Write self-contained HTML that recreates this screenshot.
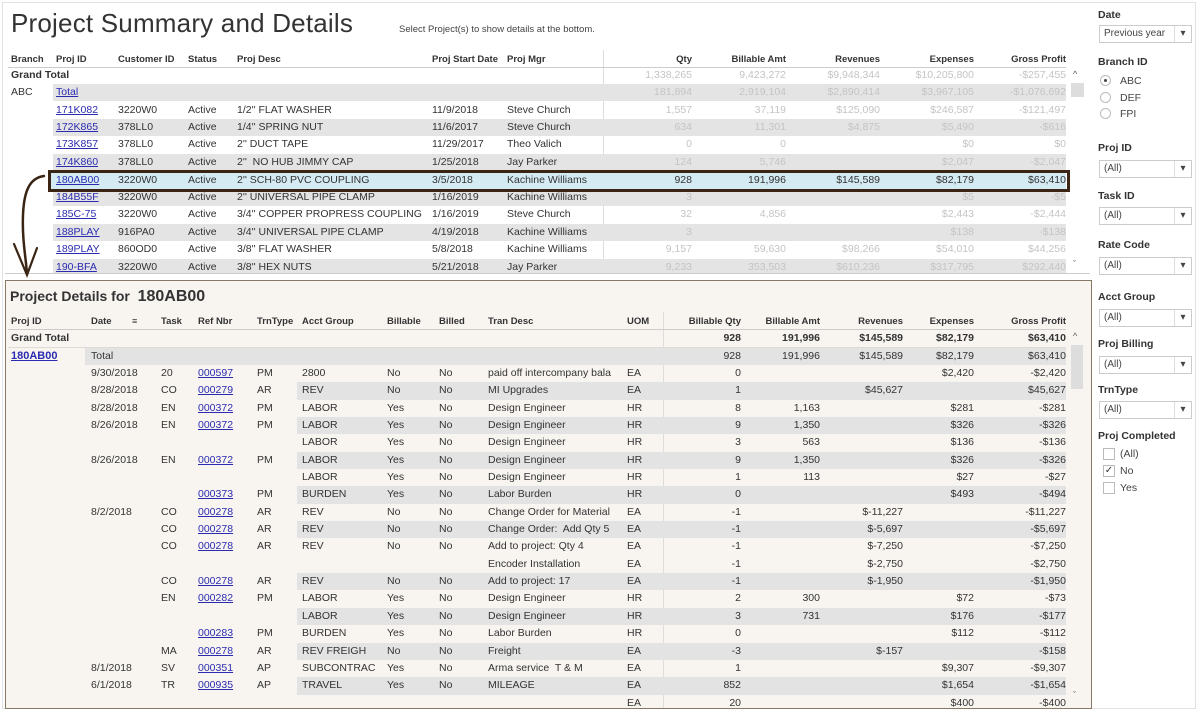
<!DOCTYPE html>
<html><head><meta charset="utf-8">
<style>
*{margin:0;padding:0;box-sizing:border-box}
body{width:1200px;height:711px;overflow:hidden;background:#fff;font-family:"Liberation Sans",sans-serif;color:#333;font-size:10.5px;position:relative}
.a{position:absolute;white-space:nowrap}
.r{position:absolute;left:0;width:1200px;height:17.4px;line-height:17.4px}
.r span{position:absolute;white-space:nowrap}
.lk{color:#2b2bb0;text-decoration:underline}
.g{color:#c4c4c4}
.hd{font-weight:bold;font-size:9.5px;color:#333}
.c1{left:11px}.c2{left:56px}.c3{left:118px}.c4{left:188px}.c5{left:237px}.c6{left:432px}.c7{left:507px}
.n1{right:508px}.n2{right:414px}.n3{right:320px}.n4{right:226px}.n5{right:134px}
.d1{left:11px}.d2{left:91px}.d3{left:161px}.d4{left:198px}.d5{left:257px}.d6{left:302px}.d7{left:387px}.d8{left:439px}.d9{left:488px}.d10{left:627px}
.m1{right:459px}.m2{right:380px}.m3{right:297px}.m4{right:226px}.m5{right:134px}
.bandT{position:absolute;left:53px;width:1013px;height:17.4px;background:#e4e4e4}
.bandD{position:absolute;left:297px;width:769px;height:17.4px;background:#e3e3e3}
.ln{position:absolute;height:1px;background:#dedad6}
.lbl{position:absolute;left:1098px;font-weight:bold;font-size:10.5px;color:#333}
.dd{position:absolute;left:1099px;width:93px;height:18px;border:1px solid #ccc;background:#fff;font-size:10px;line-height:16px;padding-left:4px;color:#444}
.dd:after{content:"▾";position:absolute;right:0;top:0;width:16px;text-align:center;border-left:1px solid #ddd;font-size:10px}
.rad{position:absolute;left:1100px;width:11px;height:11px;border:1px solid #bbb;border-radius:50%;background:#fff}
.cb{position:absolute;left:1103px;width:12px;height:12px;border:1px solid #bbb;background:#fff}
.opt{position:absolute;left:1120px;font-size:10.5px;color:#444}
</style></head><body>
<div class="a" style="left:2px;top:2px;width:1194px;height:707px;border:1px solid #e2e2e2"></div>
<div class="a" style="left:11px;top:8px;font-size:26px;color:#333;letter-spacing:0.2px">Project Summary and Details</div>
<div class="a" style="left:399px;top:24px;font-size:9.5px;color:#444">Select Project(s) to show details at the bottom.</div>

<!-- top table -->
<div class="a" style="left:603px;top:50px;width:1px;height:222px;background:#ddd"></div>
<div class="ln" style="left:8px;top:67px;width:1058px;background:#ccc"></div>
<div class="r hd" style="top:51px"><span class="c1">Branch</span><span class="c2">Proj ID</span><span class="c3">Customer ID</span><span class="c4">Status</span><span class="c5">Proj Desc</span><span class="c6">Proj Start Date</span><span class="c7">Proj Mgr</span><span class="n1">Qty</span><span class="n2">Billable Amt</span><span class="n3">Revenues</span><span class="n4">Expenses</span><span class="n5">Gross Profit</span></div>
<div class="r" style="top:66.5px"><span class="c1" style="font-weight:bold">Grand Total</span><span class="n1 g">1,338,265</span><span class="n2 g">9,423,272</span><span class="n3 g">$9,948,344</span><span class="n4 g">$10,205,800</span><span class="n5 g">-$257,455</span></div>
<div class="bandT" style="top:84px"></div>
<div class="r" style="top:84px"><span class="c1">ABC</span><span class="c2 lk">Total</span><span class="n1 g">181,894</span><span class="n2 g">2,919,104</span><span class="n3 g">$2,890,414</span><span class="n4 g">$3,967,105</span><span class="n5 g">-$1,076,692</span></div>
<div class="bandT" style="top:118.5px"></div>
<div class="bandT" style="top:153.5px"></div>
<div class="bandT" style="top:188.5px"></div>
<div class="bandT" style="top:223.5px"></div>
<div class="bandT" style="top:258.5px;height:14px"></div>
<div class="a" style="left:50px;top:173px;width:1016px;height:16px;background:#d4ebf3"></div>
<div class="r" style="top:101.5px"><span class="c2 lk">171K082</span><span class="c3">3220W0</span><span class="c4">Active</span><span class="c5">1/2'' FLAT WASHER</span><span class="c6">11/9/2018</span><span class="c7">Steve Church</span><span class="n1 g">1,557</span><span class="n2 g">37,119</span><span class="n3 g">$125,090</span><span class="n4 g">$246,587</span><span class="n5 g">-$121,497</span></div>
<div class="r" style="top:118.5px"><span class="c2 lk">172K865</span><span class="c3">378LL0</span><span class="c4">Active</span><span class="c5">1/4'' SPRING NUT</span><span class="c6">11/6/2017</span><span class="c7">Steve Church</span><span class="n1 g">634</span><span class="n2 g">11,301</span><span class="n3 g">$4,875</span><span class="n4 g">$5,490</span><span class="n5 g">-$616</span></div>
<div class="r" style="top:136px"><span class="c2 lk">173K857</span><span class="c3">378LL0</span><span class="c4">Active</span><span class="c5">2'' DUCT TAPE</span><span class="c6">11/29/2017</span><span class="c7">Theo Valich</span><span class="n1 g">0</span><span class="n2 g">0</span><span class="n4 g">$0</span><span class="n5 g">$0</span></div>
<div class="r" style="top:153.5px"><span class="c2 lk">174K860</span><span class="c3">378LL0</span><span class="c4">Active</span><span class="c5">2''&nbsp; NO HUB JIMMY CAP</span><span class="c6">1/25/2018</span><span class="c7">Jay Parker</span><span class="n1 g">124</span><span class="n2 g">5,746</span><span class="n4 g">$2,047</span><span class="n5 g">-$2,047</span></div>
<div class="r" style="top:171.5px"><span class="c2 lk">180AB00</span><span class="c3">3220W0</span><span class="c4">Active</span><span class="c5">2'' SCH-80 PVC COUPLING</span><span class="c6">3/5/2018</span><span class="c7">Kachine Williams</span><span class="n1">928</span><span class="n2">191,996</span><span class="n3">$145,589</span><span class="n4">$82,179</span><span class="n5">$63,410</span></div>
<div class="r" style="top:188.5px"><span class="c2 lk">184B55F</span><span class="c3">3220W0</span><span class="c4">Active</span><span class="c5">2'' UNIVERSAL PIPE CLAMP</span><span class="c6">1/16/2019</span><span class="c7">Kachine Williams</span><span class="n1 g">3</span><span class="n4 g">$5</span><span class="n5 g">-$5</span></div>
<div class="r" style="top:206px"><span class="c2 lk">185C-75</span><span class="c3">3220W0</span><span class="c4">Active</span><span class="c5">3/4'' COPPER PROPRESS COUPLING</span><span class="c6">1/16/2019</span><span class="c7">Steve Church</span><span class="n1 g">32</span><span class="n2 g">4,856</span><span class="n4 g">$2,443</span><span class="n5 g">-$2,444</span></div>
<div class="r" style="top:223.5px"><span class="c2 lk">188PLAY</span><span class="c3">916PA0</span><span class="c4">Active</span><span class="c5">3/4'' UNIVERSAL PIPE CLAMP</span><span class="c6">4/19/2018</span><span class="c7">Kachine Williams</span><span class="n1 g">3</span><span class="n4 g">$138</span><span class="n5 g">-$138</span></div>
<div class="r" style="top:241px"><span class="c2 lk">189PLAY</span><span class="c3">860OD0</span><span class="c4">Active</span><span class="c5">3/8'' FLAT WASHER</span><span class="c6">5/8/2018</span><span class="c7">Kachine Williams</span><span class="n1 g">9,157</span><span class="n2 g">59,630</span><span class="n3 g">$98,266</span><span class="n4 g">$54,010</span><span class="n5 g">$44,256</span></div>
<div class="r" style="top:258.5px;height:14px;overflow:hidden"><span class="c2 lk">190-BFA</span><span class="c3">3220W0</span><span class="c4">Active</span><span class="c5">3/8'' HEX NUTS</span><span class="c6">5/21/2018</span><span class="c7">Jay Parker</span><span class="n1 g">9,233</span><span class="n2 g">353,503</span><span class="n3 g">$610,236</span><span class="n4 g">$317,795</span><span class="n5 g">$292,440</span></div>
<div class="a" style="left:48px;top:170px;width:1022px;height:22px;border:3px solid #3a2514"></div>
<!-- top scrollbar -->
<div class="a" style="left:1073px;top:69px;font-size:9px;color:#555">&#94;</div>
<div class="a" style="left:1071px;top:83px;width:13px;height:14px;background:#ddd"></div>
<div class="a" style="left:1073px;top:259px;font-size:9px;color:#555">&#711;</div>
<div class="a" style="left:5px;top:273px;width:1085px;height:1px;background:#ccc"></div>

<!-- arrow -->
<svg class="a" style="left:0;top:0" width="120" height="300"><path d="M44 176 C30 178 24 190 23 215 C22 240 26 258 27 274" fill="none" stroke="#3a2514" stroke-width="2.5" stroke-linecap="round"/><path d="M14 244 L27 275 L37 248" fill="none" stroke="#3a2514" stroke-width="2.2" stroke-linecap="round"/></svg>

<!-- detail panel -->
<div class="a" style="left:5px;top:280px;width:1087px;height:429px;border:1px solid #8a7866;background:#f8f5f1;overflow:hidden">
<div style="position:absolute;left:-6px;top:-281px;width:1200px;height:711px">
<div class="a" style="left:10px;top:288px;font-size:14px;font-weight:bold;color:#333">Project Details for&nbsp; <span style="font-size:16px">180AB00</span></div>
<div class="a" style="left:663px;top:312px;width:1px;height:400px;background:#ddd"></div>
<div class="ln" style="left:8px;top:329px;width:1058px;background:#ccc"></div>
<div class="ln" style="left:8px;top:347px;width:1058px"></div>
<div class="r hd" style="top:313px"><span class="d1">Proj ID</span><span class="d2">Date</span><span style="left:132px;font-size:9px">&#8801;</span><span class="d3">Task</span><span class="d4">Ref Nbr</span><span class="d5">TrnType</span><span class="d6">Acct Group</span><span class="d7">Billable</span><span class="d8">Billed</span><span class="d9">Tran Desc</span><span class="d10">UOM</span><span class="m1">Billable Qty</span><span class="m2">Billable Amt</span><span class="m3">Revenues</span><span class="m4">Expenses</span><span class="m5">Gross Profit</span></div>
<div class="r" style="top:330px;font-weight:bold"><span class="d1">Grand Total</span><span class="m1">928</span><span class="m2">191,996</span><span class="m3">$145,589</span><span class="m4">$82,179</span><span class="m5">$63,410</span></div>

<div class="bandD" style="top:347.5px;left:85px;width:981px"></div>
<div class="bandD" style="top:382.2px"></div>
<div class="bandD" style="top:416.9px"></div>
<div class="bandD" style="top:451.6px"></div>
<div class="bandD" style="top:486.3px"></div>
<div class="bandD" style="top:521px"></div>
<div class="bandD" style="top:573.1px"></div>
<div class="bandD" style="top:607.8px"></div>
<div class="bandD" style="top:642.5px"></div>
<div class="bandD" style="top:677.2px"></div>

<div class="r" style="top:347.5px"><span class="d1 lk" style="font-weight:bold;font-size:11px">180AB00</span><span class="d2">Total</span><span class="m1">928</span><span class="m2">191,996</span><span class="m3">$145,589</span><span class="m4">$82,179</span><span class="m5">$63,410</span></div>
<div class="r" style="top:364.9px"><span class="d2">9/30/2018</span><span class="d3">20</span><span class="d4 lk">000597</span><span class="d5">PM</span><span class="d6">2800</span><span class="d7">No</span><span class="d8">No</span><span class="d9">paid off intercompany bala</span><span class="d10">EA</span><span class="m1">0</span><span class="m4">$2,420</span><span class="m5">-$2,420</span></div>
<div class="r" style="top:382.2px"><span class="d2">8/28/2018</span><span class="d3">CO</span><span class="d4 lk">000279</span><span class="d5">AR</span><span class="d6">REV</span><span class="d7">No</span><span class="d8">No</span><span class="d9">MI Upgrades</span><span class="d10">EA</span><span class="m1">1</span><span class="m3">$45,627</span><span class="m5">$45,627</span></div>
<div class="r" style="top:399.6px"><span class="d2">8/28/2018</span><span class="d3">EN</span><span class="d4 lk">000372</span><span class="d5">PM</span><span class="d6">LABOR</span><span class="d7">Yes</span><span class="d8">No</span><span class="d9">Design Engineer</span><span class="d10">HR</span><span class="m1">8</span><span class="m2">1,163</span><span class="m4">$281</span><span class="m5">-$281</span></div>
<div class="r" style="top:416.9px"><span class="d2">8/26/2018</span><span class="d3">EN</span><span class="d4 lk">000372</span><span class="d5">PM</span><span class="d6">LABOR</span><span class="d7">Yes</span><span class="d8">No</span><span class="d9">Design Engineer</span><span class="d10">HR</span><span class="m1">9</span><span class="m2">1,350</span><span class="m4">$326</span><span class="m5">-$326</span></div>
<div class="r" style="top:434.3px"><span class="d6">LABOR</span><span class="d7">Yes</span><span class="d8">No</span><span class="d9">Design Engineer</span><span class="d10">HR</span><span class="m1">3</span><span class="m2">563</span><span class="m4">$136</span><span class="m5">-$136</span></div>
<div class="r" style="top:451.6px"><span class="d2">8/26/2018</span><span class="d3">EN</span><span class="d4 lk">000372</span><span class="d5">PM</span><span class="d6">LABOR</span><span class="d7">Yes</span><span class="d8">No</span><span class="d9">Design Engineer</span><span class="d10">HR</span><span class="m1">9</span><span class="m2">1,350</span><span class="m4">$326</span><span class="m5">-$326</span></div>
<div class="r" style="top:469px"><span class="d6">LABOR</span><span class="d7">Yes</span><span class="d8">No</span><span class="d9">Design Engineer</span><span class="d10">HR</span><span class="m1">1</span><span class="m2">113</span><span class="m4">$27</span><span class="m5">-$27</span></div>
<div class="r" style="top:486.3px"><span class="d4 lk">000373</span><span class="d5">PM</span><span class="d6">BURDEN</span><span class="d7">Yes</span><span class="d8">No</span><span class="d9">Labor Burden</span><span class="d10">HR</span><span class="m1">0</span><span class="m4">$493</span><span class="m5">-$494</span></div>
<div class="r" style="top:503.7px"><span class="d2">8/2/2018</span><span class="d3">CO</span><span class="d4 lk">000278</span><span class="d5">AR</span><span class="d6">REV</span><span class="d7">No</span><span class="d8">No</span><span class="d9">Change Order for Material</span><span class="d10">EA</span><span class="m1">-1</span><span class="m3">$-11,227</span><span class="m5">-$11,227</span></div>
<div class="r" style="top:521px"><span class="d3">CO</span><span class="d4 lk">000278</span><span class="d5">AR</span><span class="d6">REV</span><span class="d7">No</span><span class="d8">No</span><span class="d9">Change Order:&nbsp; Add Qty 5</span><span class="d10">EA</span><span class="m1">-1</span><span class="m3">$-5,697</span><span class="m5">-$5,697</span></div>
<div class="r" style="top:538.4px"><span class="d3">CO</span><span class="d4 lk">000278</span><span class="d5">AR</span><span class="d6">REV</span><span class="d7">No</span><span class="d8">No</span><span class="d9">Add to project: Qty 4</span><span class="d10">EA</span><span class="m1">-1</span><span class="m3">$-7,250</span><span class="m5">-$7,250</span></div>
<div class="r" style="top:555.7px"><span class="d9">Encoder Installation</span><span class="d10">EA</span><span class="m1">-1</span><span class="m3">$-2,750</span><span class="m5">-$2,750</span></div>
<div class="r" style="top:573.1px"><span class="d3">CO</span><span class="d4 lk">000278</span><span class="d5">AR</span><span class="d6">REV</span><span class="d7">No</span><span class="d8">No</span><span class="d9">Add to project: 17</span><span class="d10">EA</span><span class="m1">-1</span><span class="m3">$-1,950</span><span class="m5">-$1,950</span></div>
<div class="r" style="top:590.4px"><span class="d3">EN</span><span class="d4 lk">000282</span><span class="d5">PM</span><span class="d6">LABOR</span><span class="d7">Yes</span><span class="d8">No</span><span class="d9">Design Engineer</span><span class="d10">HR</span><span class="m1">2</span><span class="m2">300</span><span class="m4">$72</span><span class="m5">-$73</span></div>
<div class="r" style="top:607.8px"><span class="d6">LABOR</span><span class="d7">Yes</span><span class="d8">No</span><span class="d9">Design Engineer</span><span class="d10">HR</span><span class="m1">3</span><span class="m2">731</span><span class="m4">$176</span><span class="m5">-$177</span></div>
<div class="r" style="top:625.1px"><span class="d4 lk">000283</span><span class="d5">PM</span><span class="d6">BURDEN</span><span class="d7">Yes</span><span class="d8">No</span><span class="d9">Labor Burden</span><span class="d10">HR</span><span class="m1">0</span><span class="m4">$112</span><span class="m5">-$112</span></div>
<div class="r" style="top:642.5px"><span class="d3">MA</span><span class="d4 lk">000278</span><span class="d5">AR</span><span class="d6">REV FREIGH</span><span class="d7">No</span><span class="d8">No</span><span class="d9">Freight</span><span class="d10">EA</span><span class="m1">-3</span><span class="m3">$-157</span><span class="m5">-$158</span></div>
<div class="r" style="top:659.8px"><span class="d2">8/1/2018</span><span class="d3">SV</span><span class="d4 lk">000351</span><span class="d5">AP</span><span class="d6">SUBCONTRAC</span><span class="d7">Yes</span><span class="d8">No</span><span class="d9">Arma service&nbsp; T &amp; M</span><span class="d10">EA</span><span class="m1">1</span><span class="m4">$9,307</span><span class="m5">-$9,307</span></div>
<div class="r" style="top:677.2px"><span class="d2">6/1/2018</span><span class="d3">TR</span><span class="d4 lk">000935</span><span class="d5">AP</span><span class="d6">TRAVEL</span><span class="d7">Yes</span><span class="d8">No</span><span class="d9">MILEAGE</span><span class="d10">EA</span><span class="m1">852</span><span class="m4">$1,654</span><span class="m5">-$1,654</span></div>
<div class="r" style="top:694.5px"><span class="d10">EA</span><span class="m1">20</span><span class="m4">$400</span><span class="m5">-$400</span></div>
<div class="a" style="left:1073px;top:331px;font-size:9px;color:#555">&#94;</div>
<div class="a" style="left:1071px;top:345px;width:12px;height:44px;background:#ddd"></div>
<div class="a" style="left:1073px;top:690px;font-size:9px;color:#555">&#711;</div>
</div></div>

<!-- filters -->
<div class="lbl" style="top:9px">Date</div>
<div class="dd" style="top:25px">Previous year</div>
<div class="lbl" style="top:56px">Branch ID</div>
<div class="rad" style="top:75px"><div style="position:absolute;left:3px;top:3px;width:3px;height:3px;border-radius:50%;background:#444"></div></div><div class="opt" style="top:75px">ABC</div>
<div class="rad" style="top:92px"></div><div class="opt" style="top:92px">DEF</div>
<div class="rad" style="top:108px"></div><div class="opt" style="top:108px">FPI</div>
<div class="lbl" style="top:142px">Proj ID</div><div class="dd" style="top:160px">(All)</div>
<div class="lbl" style="top:190px">Task ID</div><div class="dd" style="top:207px">(All)</div>
<div class="lbl" style="top:239px">Rate Code</div><div class="dd" style="top:257px">(All)</div>
<div class="lbl" style="top:291px">Acct Group</div><div class="dd" style="top:309px">(All)</div>
<div class="lbl" style="top:338px">Proj Billing</div><div class="dd" style="top:356px">(All)</div>
<div class="lbl" style="top:384px">TrnType</div><div class="dd" style="top:401px">(All)</div>
<div class="lbl" style="top:430px">Proj Completed</div>
<div class="cb" style="top:448px"></div><div class="opt" style="top:448px">(All)</div>
<div class="cb" style="top:465px;font-size:10px;line-height:10px;text-align:center">&#10003;</div><div class="opt" style="top:465px">No</div>
<div class="cb" style="top:482px"></div><div class="opt" style="top:482px">Yes</div>
</body></html>
